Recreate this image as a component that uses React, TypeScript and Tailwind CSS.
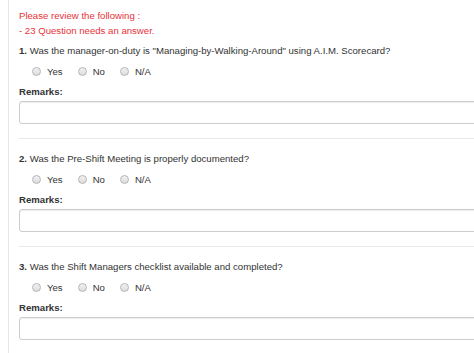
const questions = [
  'Was the manager-on-duty is "Managing-by-Walking-Around" using A.I.M. Scorecard?',
  'Was the Pre-Shift Meeting is properly documented?',
  'Was the Shift Managers checklist available and completed?',
];

function Radio({ label }: { label: string }) {
  return (
    <label className="flex items-center">
      <span className="w-[9px] h-[9px] rounded-full border border-[#b5b5b5] bg-gradient-to-b from-[#f2f2f2] to-[#dcdcdc]" />
      <span className="ml-[6px]">{label}</span>
    </label>
  );
}

export default function App() {
  return (
    <div className="w-[474px] h-[353px] overflow-hidden bg-white pl-[8px] font-['Liberation_Sans',Arial,sans-serif] text-[9.6px] leading-[15px] text-[#333]">
      <div className="border-l border-[#e6e6e6] pl-[10px] pt-[8px] h-full">
        <div className="text-[#e8323a]">
          <div>Please review the following :</div>
          <div>- 23 Question needs an answer.</div>
        </div>
        {questions.map((q, i) => (
          <div key={i} className={i === 0 ? 'mt-[5px]' : 'mt-[12px]'}>
            <div>
              <b>{i + 1}.</b> {q}
            </div>
            <div className="mt-[6px] flex gap-[15px] pl-[13px]">
              <Radio label="Yes" />
              <Radio label="No" />
              <Radio label="N/A" />
            </div>
            <div className="mt-[5px] font-bold">Remarks:</div>
            <div className="mt-[2px] h-[23px] -mr-[4px] rounded-[3px] border border-[#cccccc] shadow-[inset_0_1px_1px_rgba(0,0,0,0.075)]" />
            {i < 2 && <div className="mt-[14px] h-px bg-[#e8e8e8]" />}
          </div>
        ))}
      </div>
    </div>
  );
}
